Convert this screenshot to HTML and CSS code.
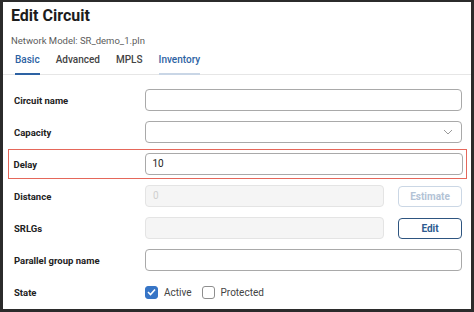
FILE: index.html
```html
<!DOCTYPE html>
<html lang="en">
<head>
  <meta charset="UTF-8" />
  <title>Edit Circuit</title>
  <link rel="stylesheet" href="styles.css">
</head>
<body>

  <div class="window">

    <!-- Header -->
    <div class="header">
      <div class="title">Edit Circuit</div>
      <div class="subtitle">Network Model: SR_demo_1.pln</div>
    </div>

    <!-- Tabs -->
    <div class="tabs">
      <div class="tab active">Basic</div>
      <div class="tab">Advanced</div>
      <div class="tab">MPLS</div>
      <div class="tab hover">Inventory</div>
    </div>

    <!-- Form -->
    <div class="form">
      <div class="row">
        <div class="label">Circuit name</div>
        <div class="field"><div class="input"></div></div>
      </div>

      <div class="row">
        <div class="label">Capacity</div>
        <div class="field">
          <div class="input select">
            <svg class="chevron" width="10" height="6" viewBox="0 0 10 6">
              <path d="M1 1 L5 5 L9 1" fill="none" stroke="#9a9a9a" stroke-width="1"/>
            </svg>
          </div>
        </div>
      </div>

      <div class="row highlight">
        <div class="label">Delay</div>
        <div class="field"><div class="input">10</div></div>
      </div>

      <div class="row">
        <div class="label">Distance</div>
        <div class="field">
          <div class="input disabled">0</div>
          <div class="button muted">Estimate</div>
        </div>
      </div>

      <div class="row">
        <div class="label">SRLGs</div>
        <div class="field">
          <div class="input disabled"></div>
          <div class="button">Edit</div>
        </div>
      </div>

      <div class="row">
        <div class="label">Parallel group name</div>
        <div class="field"><div class="input"></div></div>
      </div>

      <div class="row state">
        <div class="label">State</div>
        <div class="field checks">
          <div class="check">
            <span class="box checked">
              <svg width="9" height="8" viewBox="0 0 9 8">
                <path d="M1 4 L3.5 6.5 L8 1.5" fill="none" stroke="white" stroke-width="1.6"/>
              </svg>
            </span>
            Active
          </div>
          <div class="check">
            <span class="box"></span>
            Protected
          </div>
        </div>
      </div>
    </div>

  </div>

</body>
</html>
```

FILE: styles.css
```css
body {
  margin: 0;
  background: #2b2b2b;
  font-family: Roboto, 'Liberation Sans', sans-serif;
  color: #1c1c1c;
  overflow: hidden;
}

.window {
  margin: 2px 3px 0 3px;
  height: 307px;
  background: white;
  overflow: hidden;
}

.header {
  padding: 4px 8px 0 8px;
}

.title {
  font-size: 16px;
  font-weight: 700;
  line-height: 20px;
}

.subtitle {
  font-size: 9.5px;
  color: #5c5c5c;
  margin-top: 9px;
  line-height: 12px;
}

.tabs {
  display: flex;
  gap: 16px;
  padding: 0 12px;
  margin-top: 7px;
  border-bottom: 1px solid #e6e6e6;
}

.tab {
  font-size: 10px;
  font-weight: 500;
  color: #444;
  line-height: 12px;
  padding-bottom: 7px;
  border-bottom: 2px solid transparent;
  margin-bottom: -1px;
}

.tab.active {
  color: #2d62a3;
  border-bottom-color: #2d62a3;
}

.tab.hover {
  color: #2d62a3;
  border-bottom-color: #c9d6e6;
}

.form {
  padding-top: 9px;
}

.row {
  display: flex;
  align-items: center;
  height: 32px;
  padding: 0 9px 0 11px;
}

.row.highlight {
  height: 30px;
  margin: 1px 4px 1px 5px;
  padding: 0 3.5px 0 4.5px;
  border: 1.5px solid #e5675a;
  box-sizing: border-box;
}

.label {
  width: 131px;
  flex-shrink: 0;
  font-size: 9.5px;
  font-weight: 700;
  color: #222;
}

.field {
  flex: 1;
  display: flex;
  gap: 14px;
  align-items: center;
}

.input {
  flex: 1;
  height: 22px;
  box-sizing: border-box;
  border: 1px solid #a9a9a9;
  border-radius: 4px;
  font-size: 10px;
  line-height: 20px;
  padding: 0 7px;
  color: #222;
}

.input.select {
  display: flex;
  justify-content: flex-end;
  align-items: center;
  padding-right: 8px;
}

.input.disabled {
  background: #f5f5f5;
  border-color: #e4e4e4;
  color: #cfcfcf;
}

.button {
  width: 64px;
  height: 21px;
  box-sizing: border-box;
  border: 1.5px solid #2e5580;
  border-radius: 4px;
  font-size: 10px;
  font-weight: 700;
  color: #2d5a8f;
  display: flex;
  align-items: center;
  justify-content: center;
}

.button.muted {
  border-color: #cbd7e5;
  color: #b3c3d6;
}

.checks {
  gap: 0;
}

.check {
  display: flex;
  align-items: center;
  gap: 6px;
  font-size: 10px;
  color: #444;
  margin-right: 10px;
}

.box {
  width: 13px;
  height: 13px;
  box-sizing: border-box;
  border: 1px solid #8e8e8e;
  border-radius: 3px;
  display: flex;
  align-items: center;
  justify-content: center;
}

.box.checked {
  background: #3775c6;
  border-color: #3775c6;
}
```
